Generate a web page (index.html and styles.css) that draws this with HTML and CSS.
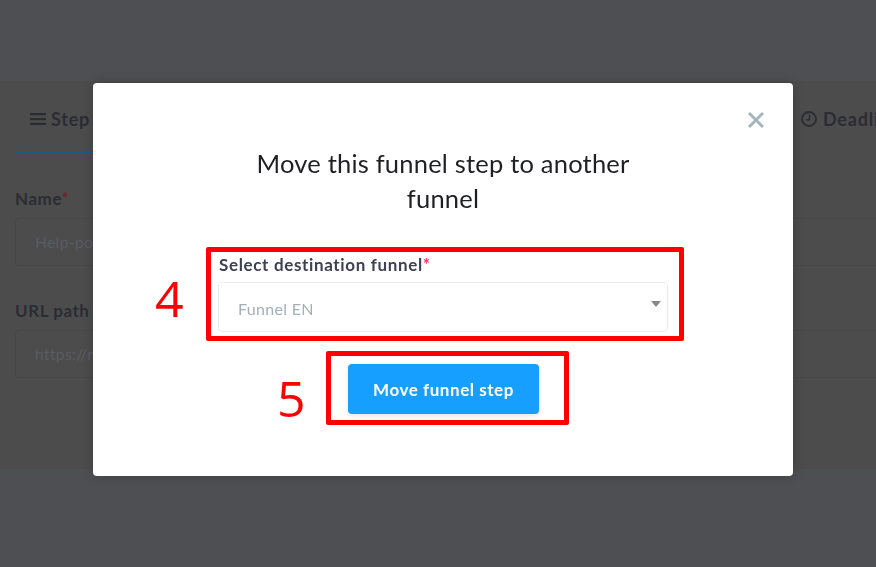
FILE: index.html
```html
<!DOCTYPE html>
<html lang="en">
<head>
  <meta charset="UTF-8" />
  <title>Move funnel step</title>
  <link rel="stylesheet" href="styles.css">
</head>
<body>

<div class="page">
  <div class="card">
    <div class="tabs">
      <div class="tab active">
        <svg class="tab-icon" viewBox="0 0 16 16" width="16" height="16"><path d="M0 2h16v2.3H0zM0 6.900h16v2.300H0zM0 11.800h16v2.300H0z" fill="currentColor"/></svg>
        Step
      </div>
      <div class="tab">
        <svg class="tab-icon" viewBox="0 0 16 16" width="16" height="16"><circle cx="8" cy="8" r="7" fill="none" stroke="currentColor" stroke-width="1.800"/><path d="M8.500 3.800v4.900H5" fill="none" stroke="currentColor" stroke-width="1.500"/></svg>
        Deadline
      </div>
    </div>
    <div class="field">
      <label>Name<span class="req">*</span></label>
      <div class="fake-input">Help-portal</div>
    </div>
    <div class="field">
      <label>URL path</label>
      <div class="fake-input">https://r</div>
    </div>
  </div>
</div>

<div class="modal-wrap">
  <div class="modal">
    <svg class="close" viewBox="0 0 18 18" width="18" height="18"><path d="M2 2l14 14M16 2L2 16" fill="none" stroke="#a5b4bd" stroke-width="3"/></svg>
    <h2>Move this funnel step to another funnel</h2>

    <div class="mark mark-select">
      <span class="num num-4">4</span>
      <label>Select destination funnel<span class="req">*</span></label>
      <div class="select">
        Funnel EN
        <span class="caret"></span>
      </div>
    </div>

    <div class="mark mark-button">
      <span class="num num-5">5</span>
      <button>Move funnel step</button>
    </div>
  </div>
</div>

</body>
</html>
```

FILE: styles.css
```css
html, body {
  margin: 0;
  height: 100%;
  overflow: hidden;
}
body {
  font-family: Lato, 'Noto Sans', sans-serif;
  background: #4e4f52;
}
.page {
  padding-top: 81px;
}
.card {
  background: #4c4c4c;
  height: 388px;
  padding-left: 15px;
  box-sizing: border-box;
}
.tabs {
  display: flex;
  justify-content: space-between;
  margin-bottom: 35px;
}
.tab {
  height: 73px;
  box-sizing: border-box;
  padding: 27px 0 0 15px;
  width: 78px;
  font-size: 18px;
  font-weight: 700;
  letter-spacing: 0.8px;
  color: #2b2c33;
  white-space: nowrap;
  display: flex;
  gap: 5px;
}
.tab.active {
  border-bottom: 3px solid #0f5f86;
}
.tab:last-child {
  width: 75px;
  padding-left: 0;
  gap: 6px;
}
.tab-icon {
  margin-top: 3px;
  flex: none;
}
.field {
  margin-bottom: 35px;
}
label {
  display: block;
  font-size: 17px;
  font-weight: 700;
  letter-spacing: 0.55px;
  color: #2b2c33;
  line-height: 20px;
}
.req {
  color: #7a1c33;
}
.fake-input {
  margin-top: 9px;
  height: 48px;
  box-sizing: border-box;
  border: 1px solid #474747;
  border-right: 0;
  border-radius: 4px 0 0 4px;
  padding: 14px 19px;
  font-size: 15.500px;
  letter-spacing: 0.4px;
  color: #5a5b63;
}
.modal-wrap {
  position: fixed;
  inset: 0;
}
.modal {
  position: absolute;
  left: 93px;
  top: 83px;
  width: 700px;
  height: 393px;
  box-sizing: border-box;
  background: #fff;
  border-radius: 4px;
  padding-top: 63px;
  box-shadow: 0 0 12px rgba(0, 0, 0, 0.2);
}
.close {
  position: absolute;
  right: 28px;
  top: 28px;
}
h2 {
  margin: 0 auto;
  width: 400px;
  font-size: 25.500px;
  font-weight: 400;
  letter-spacing: 0.2px;
  line-height: 35px;
  text-align: center;
  color: #1f2024;
}
.mark {
  box-sizing: border-box;
  border: 5px solid #f00;
  border-radius: 2px;
  position: relative;
}
.mark-select {
  margin: 31px 0 0 113px;
  width: 478px;
  height: 94px;
  padding: 3px 11px 0 7px;
}
.mark-select label {
  color: #3e4053;
  letter-spacing: 0.65px;
  padding-left: 1px;
}
.mark-select .req {
  color: #f5365c;
}
.select {
  margin-top: 7px;
  height: 50px;
  box-sizing: border-box;
  border: 1px solid #e9ecef;
  border-radius: 4px;
  padding: 16px 19px;
  font-size: 16px;
  letter-spacing: 0.3px;
  color: #a3afb9;
  position: relative;
}
.caret {
  position: absolute;
  right: 6px;
  top: 18px;
  border-left: 5px solid transparent;
  border-right: 5px solid transparent;
  border-top: 6px solid #888;
}
.mark-button {
  margin: 10px 0 0 233px;
  width: 243px;
  height: 74px;
  padding: 8px 0 0 17px;
}
button {
  display: block;
  width: 191px;
  height: 50px;
  border: 0;
  border-radius: 4px;
  background: #169ffe;
  color: #fff;
  font-family: inherit;
  font-size: 17px;
  font-weight: 700;
  letter-spacing: 0.55px;
  box-shadow: 0 2px 5px rgba(0, 0, 0, 0.1);
}
.num {
  position: absolute;
  font-family: 'Open Sans', sans-serif;
  color: #f00;
  font-size: 50px;
  line-height: 50px;
}
.num-4 {
  left: -56px;
  top: 21px;
}
.num-5 {
  left: -54px;
  top: 17px;
}
```
